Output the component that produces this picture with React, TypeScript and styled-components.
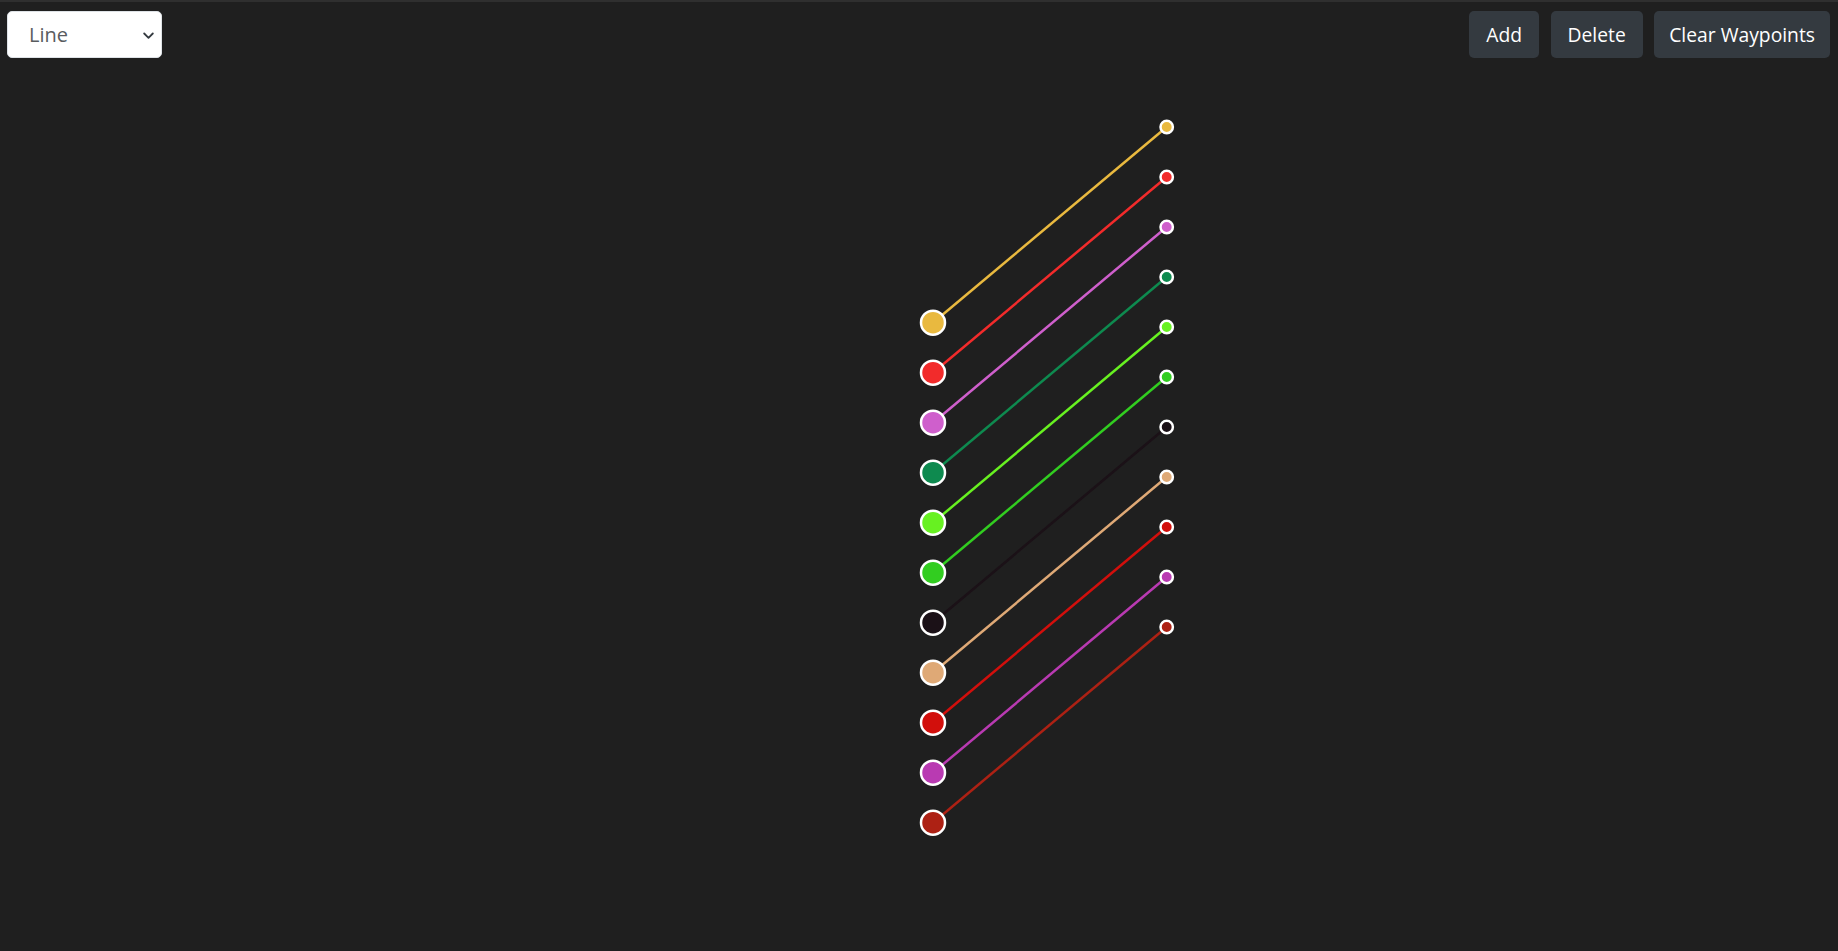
import styled, { createGlobalStyle } from "styled-components";

const GlobalStyle = createGlobalStyle`
  html, body {
    margin: 0;
    padding: 0;
    background: #1f1f1f;
  }
  body {
    border-top: 2px solid #2f2f2f;
    font-family: "Open Sans", "Noto Sans", Arial, sans-serif;
  }
`;

const COLORS = [
  "#e9b93f",
  "#f22b2b",
  "#cf5fcc",
  "#0e8a4f",
  "#67f121",
  "#32cd20",
  "#1b1117",
  "#dfa976",
  "#d20f0c",
  "#b93ab2",
  "#ad2114",
];

const Page = styled.div`
  display: flex;
  flex-direction: column;
  height: 949px;
  overflow: hidden;
`;

const Toolbar = styled.div`
  display: flex;
  align-items: center;
  justify-content: space-between;
  padding: 9px 8px 0 7px;
`;

const SelectWrap = styled.div`
  position: relative;
  width: 155px;
  height: 47px;
`;

const Select = styled.select`
  appearance: none;
  width: 100%;
  height: 100%;
  padding: 0 40px 0 21px;
  border: 1px solid #dee2e6;
  border-radius: 5px;
  background: #fff;
  color: #595c5f;
  font-family: inherit;
  font-size: 20px;
  outline: none;
`;

const Chevron = styled.svg`
  position: absolute;
  right: 8px;
  top: 21px;
  pointer-events: none;
`;

const Buttons = styled.div`
  display: flex;
  gap: 11.5px;
`;

const Button = styled.button<{ $wide?: boolean }>`
  height: 47px;
  padding: 0 ${({ $wide }) => ($wide ? "17px" : "15px")};
  border: none;
  border-radius: 5px;
  background: #343a40;
  color: #fff;
  font-family: inherit;
  font-size: 19.3px;
  cursor: pointer;
`;

const Canvas = styled.svg`
  display: block;
  flex: 1;
`;

export default function App() {
  return (
    <>
      <GlobalStyle />
      <Page>
        <Toolbar>
          <SelectWrap>
            <Select defaultValue="line">
              <option value="line">Line</option>
              <option value="curve">Curve</option>
            </Select>
            <Chevron width="11" height="8" viewBox="0 0 11 8">
              <path
                d="M1.2 1.5l4.3 4.3 4.3-4.3"
                fill="none"
                stroke="#343a40"
                strokeWidth="1.8"
                strokeLinecap="round"
                strokeLinejoin="round"
              />
            </Chevron>
          </SelectWrap>
          <Buttons>
            <Button $wide>Add</Button>
            <Button $wide>Delete</Button>
            <Button>Clear Waypoints</Button>
          </Buttons>
        </Toolbar>
        <Canvas width="1838" height="891" viewBox="0 58 1838 891">
          {COLORS.map((c, i) => {
            const y1 = 321.7 + i * 50;
            const y2 = 126 + i * 50;
            return (
              <g key={c + i}>
                <line
                  x1={933}
                  y1={y1}
                  x2={1166.7}
                  y2={y2}
                  stroke={c}
                  strokeWidth={2.5}
                />
                <circle cx={933} cy={y1} r={12} fill={c} stroke="#fff" strokeWidth={2.5} />
                <circle cx={1166.7} cy={y2} r={6.2} fill={c} stroke="#fff" strokeWidth={2.5} />
              </g>
            );
          })}
        </Canvas>
      </Page>
    </>
  );
}
